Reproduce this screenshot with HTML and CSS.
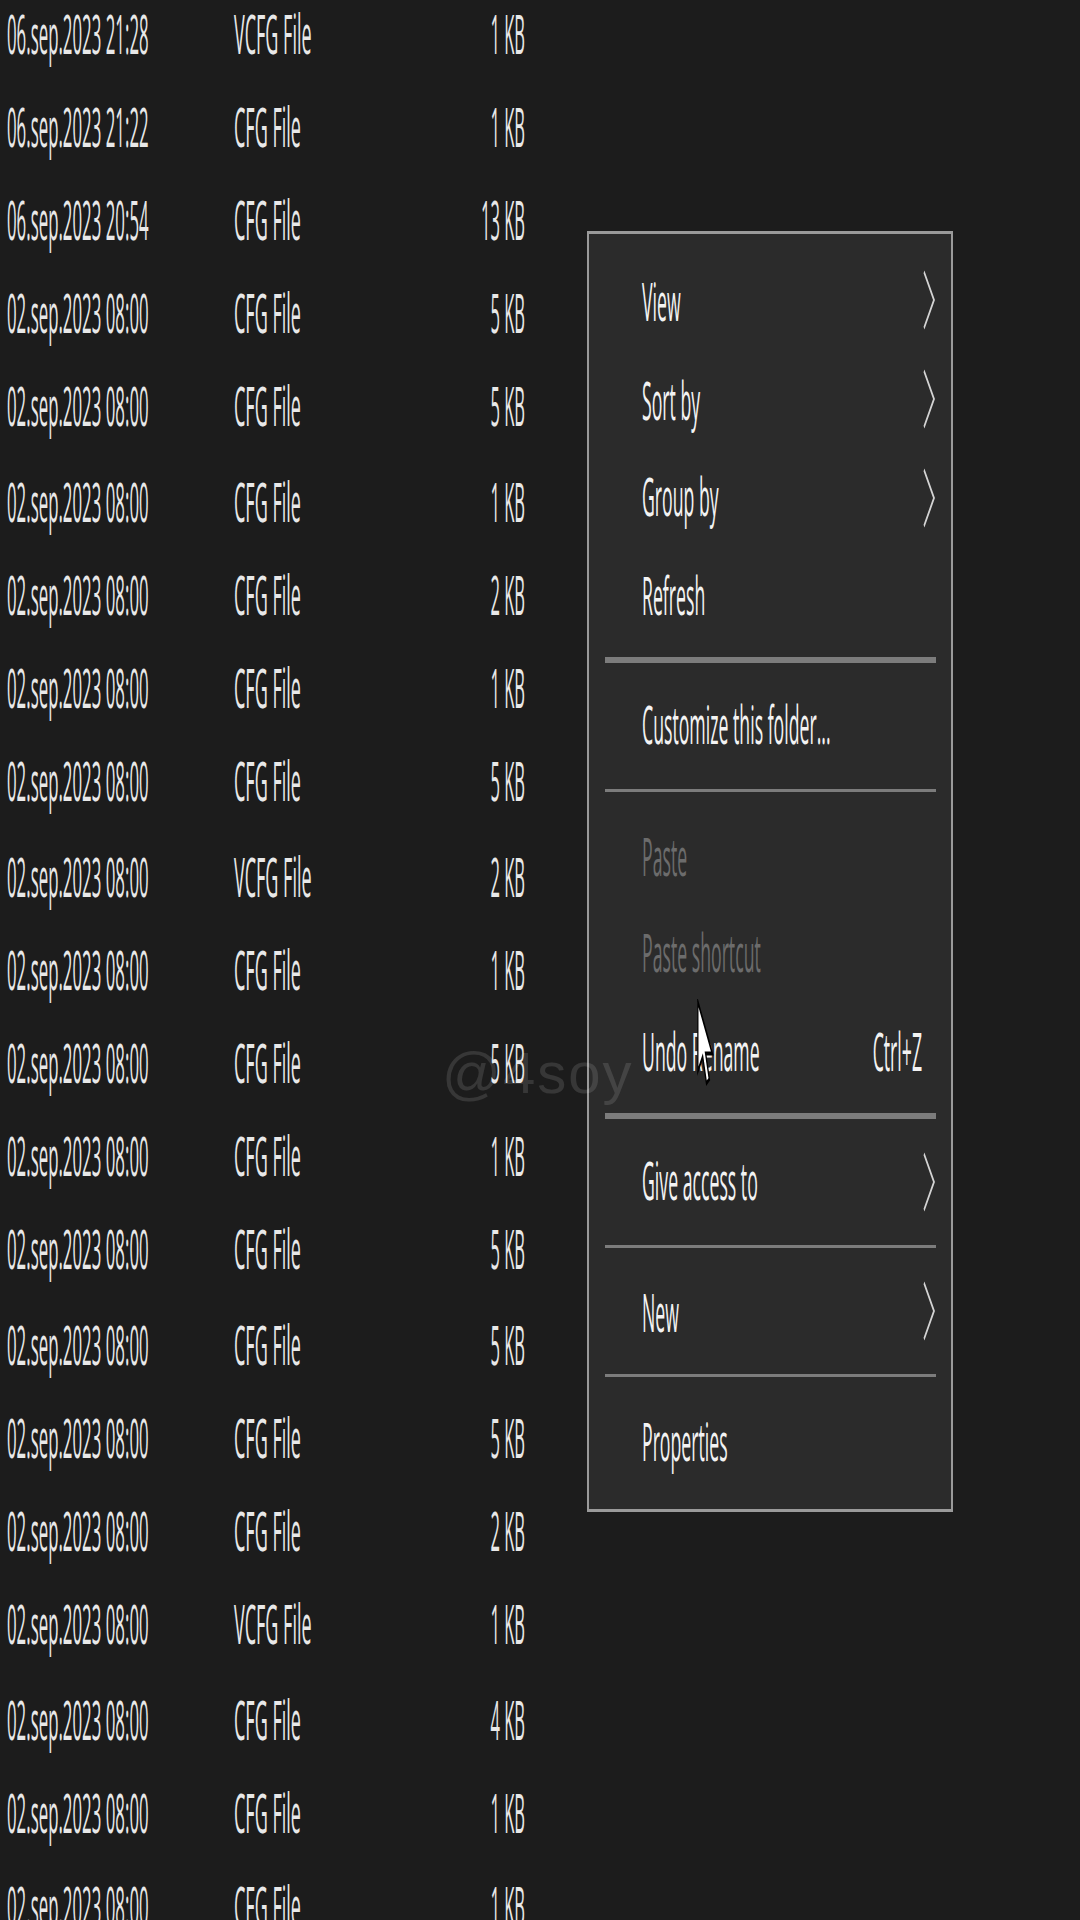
FILE: index.html
```html
<!DOCTYPE html>
<html lang="en">
<head>
<meta charset="utf-8">
<title>Explorer context menu</title>
<link rel="stylesheet" href="styles.css">
</head>
<body>
<div class="screen">
  <div class="list">
    <div class="row"><span class="date">06.sep.2023 21:28</span><span class="type">VCFG File</span><span class="size">1 KB</span></div>
    <div class="row"><span class="date">06.sep.2023 21:22</span><span class="type">CFG File</span><span class="size">1 KB</span></div>
    <div class="row"><span class="date">06.sep.2023 20:54</span><span class="type">CFG File</span><span class="size">13 KB</span></div>
    <div class="row"><span class="date">02.sep.2023 08:00</span><span class="type">CFG File</span><span class="size">5 KB</span></div>
    <div class="row"><span class="date">02.sep.2023 08:00</span><span class="type">CFG File</span><span class="size">5 KB</span></div>
    <div class="row"><span class="date">02.sep.2023 08:00</span><span class="type">CFG File</span><span class="size">1 KB</span></div>
    <div class="row"><span class="date">02.sep.2023 08:00</span><span class="type">CFG File</span><span class="size">2 KB</span></div>
    <div class="row"><span class="date">02.sep.2023 08:00</span><span class="type">CFG File</span><span class="size">1 KB</span></div>
    <div class="row"><span class="date">02.sep.2023 08:00</span><span class="type">CFG File</span><span class="size">5 KB</span></div>
    <div class="row"><span class="date">02.sep.2023 08:00</span><span class="type">VCFG File</span><span class="size">2 KB</span></div>
    <div class="row"><span class="date">02.sep.2023 08:00</span><span class="type">CFG File</span><span class="size">1 KB</span></div>
    <div class="row"><span class="date">02.sep.2023 08:00</span><span class="type">CFG File</span><span class="size">5 KB</span></div>
    <div class="row"><span class="date">02.sep.2023 08:00</span><span class="type">CFG File</span><span class="size">1 KB</span></div>
    <div class="row"><span class="date">02.sep.2023 08:00</span><span class="type">CFG File</span><span class="size">5 KB</span></div>
    <div class="row"><span class="date">02.sep.2023 08:00</span><span class="type">CFG File</span><span class="size">5 KB</span></div>
    <div class="row"><span class="date">02.sep.2023 08:00</span><span class="type">CFG File</span><span class="size">5 KB</span></div>
    <div class="row"><span class="date">02.sep.2023 08:00</span><span class="type">CFG File</span><span class="size">2 KB</span></div>
    <div class="row"><span class="date">02.sep.2023 08:00</span><span class="type">VCFG File</span><span class="size">1 KB</span></div>
    <div class="row"><span class="date">02.sep.2023 08:00</span><span class="type">CFG File</span><span class="size">4 KB</span></div>
    <div class="row"><span class="date">02.sep.2023 08:00</span><span class="type">CFG File</span><span class="size">1 KB</span></div>
    <div class="row"><span class="date">02.sep.2023 08:00</span><span class="type">CFG File</span><span class="size">1 KB</span></div>
  </div>

  <div class="menu">
    <div class="item"><span class="label">View</span><svg class="chev" viewBox="0 0 12 20" preserveAspectRatio="none"><polyline points="1,0.6 11,10 1,19.4"/></svg></div>
    <div class="item"><span class="label">Sort by</span><svg class="chev" viewBox="0 0 12 20" preserveAspectRatio="none"><polyline points="1,0.6 11,10 1,19.4"/></svg></div>
    <div class="item"><span class="label">Group by</span><svg class="chev" viewBox="0 0 12 20" preserveAspectRatio="none"><polyline points="1,0.6 11,10 1,19.4"/></svg></div>
    <div class="item"><span class="label">Refresh</span></div>
    <div class="sep"></div>
    <div class="item"><span class="label">Customize this folder...</span></div>
    <div class="sep"></div>
    <div class="item disabled"><span class="label">Paste</span></div>
    <div class="item disabled"><span class="label">Paste shortcut</span></div>
    <div class="item"><span class="label">Undo Rename</span><span class="shortcut">Ctrl+Z</span></div>
    <div class="sep"></div>
    <div class="item"><span class="label">Give access to</span><svg class="chev" viewBox="0 0 12 20" preserveAspectRatio="none"><polyline points="1,0.6 11,10 1,19.4"/></svg></div>
    <div class="sep"></div>
    <div class="item"><span class="label">New</span><svg class="chev" viewBox="0 0 12 20" preserveAspectRatio="none"><polyline points="1,0.6 11,10 1,19.4"/></svg></div>
    <div class="sep"></div>
    <div class="item"><span class="label">Properties</span></div>
  </div>

  <svg class="cursor" viewBox="0 0 12 19" preserveAspectRatio="none">
    <path d="M0.6 0.6 L0.6 15.8 L4 12.6 L6.7 18.4 L8.7 17.5 L6.1 11.9 L10.8 11.9 Z"/>
  </svg>
</div>
<div class="watermark">@4soy</div>
</body>
</html>
```

FILE: styles.css
```css
html, body {
  margin: 0;
  padding: 0;
  width: 1080px;
  height: 1920px;
  overflow: hidden;
  background: #1c1c1c;
}

body {
  position: relative;
  font-family: "Open Sans", "Noto Sans", "Liberation Sans", sans-serif;
}

/* The captured screen is stretched 3x vertically */
.screen {
  position: relative;
  width: 1080px;
  height: 640px;
  overflow: hidden;
  background: #1c1c1c;
  transform: scaleY(3);
  transform-origin: 0 0;
}

.list {
  margin-top: -4.4px;
  color: #e8e8e8;
  font-size: 18px;
}

.row {
  display: grid;
  grid-template-columns: 227px 191px 100px;
  padding-left: 7px;
  height: 31.22px;
  line-height: 31.22px;
  white-space: nowrap;
}

.date {
  transform: scaleX(0.935);
  transform-origin: 0 50%;
}

.size {
  text-align: right;
  transform: scaleX(0.92);
  transform-origin: 100% 50%;
}

.menu {
  position: absolute;
  left: 587px;
  top: 77.3px;
  width: 366px;
  box-sizing: border-box;
  background: #2b2b2b;
  border-style: solid;
  border-color: #9a9a9a;
  border-width: 1.4px 2px;
  padding: 5.7px 0 6.4px;
  display: flex;
  flex-direction: column;
  color: #f3f3f3;
  font-size: 17.7px;
}

.item {
  display: flex;
  align-items: center;
  height: 32.67px;
  line-height: 32.67px;
  padding: 0 16px 0 53px;
  white-space: nowrap;
}

.item .label {
  flex: 1;
}

.item.disabled {
  color: #6c6c6c;
}

.shortcut {
  margin-right: 13px;
}

.chev {
  width: 12px;
  height: 20px;
  fill: none;
  stroke: #d4d4d4;
  stroke-width: 1.3;
}

.sep {
  height: 1.33px;
  margin: 4.7px 15px 4.7px 16px;
  background: #7c7c7c;
}

.cursor {
  position: absolute;
  left: 697px;
  top: 333px;
  width: 17px;
  height: 29px;
}

.cursor path {
  fill: #ffffff;
  stroke: #000000;
  stroke-width: 0.9;
  stroke-linejoin: miter;
}

.watermark {
  position: absolute;
  left: 442px;
  top: 1044px;
  font-family: "Liberation Sans", Arial, sans-serif;
  font-size: 58px;
  line-height: 58px;
  letter-spacing: 2px;
  color: rgba(255, 255, 255, 0.12);
  white-space: nowrap;
}
```
